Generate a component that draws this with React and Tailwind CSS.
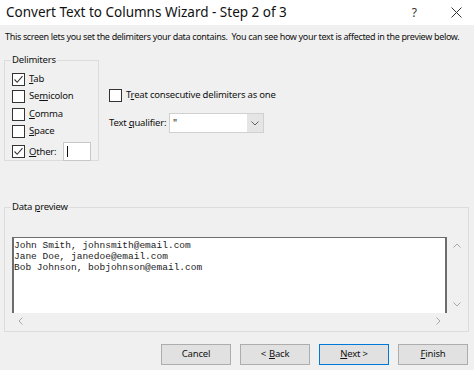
import React from "react";

const F = { fontFamily: '"Noto Sans", "Open Sans", sans-serif' };

function Box({ checked }) {
  return (
    <span className="w-[13px] h-[13px] border border-[#333333] bg-white flex items-center justify-center shrink-0">
      {checked && (
        <svg width="11" height="11" viewBox="0 0 11 11">
          <path d="M1.5 5.5 L4.2 8.3 L9.5 2.2" fill="none" stroke="#333" strokeWidth="1.1" />
        </svg>
      )}
    </span>
  );
}

function Chk({ checked, pre, u, post }) {
  return (
    <div className="flex items-center h-[17.5px]">
      <Box checked={checked} />
      <span className="ml-[4px] text-[9.5px] tracking-[-0.2px] text-[#111]">
        {pre}
        <span className="underline">{u}</span>
        {post}
      </span>
    </div>
  );
}

function Btn({ children, primary }) {
  return (
    <div
      className={
        "w-[70px] h-[21px] flex items-center justify-center text-[9.5px] tracking-[-0.2px] text-[#111] bg-[#e1e1e1] border " +
        (primary ? "border-[#0078d7]" : "border-[#adadad]")
      }
    >
      {children}
    </div>
  );
}

export default function App() {
  return (
    <div className="w-[474px] h-[370px] bg-[#f0f0f0] overflow-hidden flex flex-col" style={F}>
      <div className="h-[25px] bg-white flex items-center pl-[6px] shrink-0">
        <span className="text-[13.5px] text-[#111]">Convert Text to Columns Wizard - Step 2 of 3</span>
        <span className="ml-auto text-[12px] text-[#333] mr-[34px]">?</span>
        <svg width="11" height="11" viewBox="0 0 11 11" className="mr-[12px]">
          <path d="M0.5 0.5 L10.5 10.5 M10.5 0.5 L0.5 10.5" stroke="#333" strokeWidth="1" />
        </svg>
      </div>
      <div className="pl-[5px] pt-[5px] h-[25px] text-[9px] text-[#111] whitespace-nowrap tracking-[-0.33px]">
        This screen lets you set the delimiters your data contains.&nbsp; You can see how your text is affected in the preview below.
      </div>
      <div className="flex mt-[3px]">
        <fieldset className="ml-[4px] w-[95px] h-[108px] border border-[#dcdcdc] pl-[7px] pt-[3px]">
          <legend className="text-[9.5px] tracking-[-0.2px] text-[#111] ml-[-1px] px-[1px]">Delimiters</legend>
          <Chk checked pre="" u="T" post="ab" />
          <Chk pre="Se" u="m" post="icolon" />
          <Chk pre="" u="C" post="omma" />
          <Chk pre="" u="S" post="pace" />
          <div className="flex items-center h-[21px] mt-[1px]">
            <Box checked />
            <span className="ml-[4px] text-[9.5px] tracking-[-0.2px] text-[#111]">
              <span className="underline">O</span>ther:
            </span>
            <span className="ml-[7px] w-[28px] h-[19px] bg-white border border-[#c8c8c8] flex items-center pl-[3px]">
              <span className="w-px h-[11px] bg-[#111]" />
            </span>
          </div>
        </fieldset>
        <div className="ml-[10px] pt-[35px] flex flex-col">
          <div className="flex items-center">
            <Box />
            <span className="ml-[4px] text-[9.5px] tracking-[-0.2px] text-[#111]">
              T<span className="underline">r</span>eat consecutive delimiters as one
            </span>
          </div>
          <div className="flex items-center mt-[11px]">
            <span className="w-[60px] text-[9.5px] tracking-[-0.2px] text-[#111] whitespace-nowrap">
              Text <span className="underline">q</span>ualifier:
            </span>
            <div className="w-[95px] h-[20px] bg-white border border-[#d0d0d0] flex items-center">
              <span className="ml-[3px] text-[10px] text-[#111] flex-1">"</span>
              <span className="w-[16px] h-full bg-[#e5e5e5] flex items-center justify-center">
                <svg width="8" height="5" viewBox="0 0 8 5">
                  <path d="M0.5 0.5 L4 4 L7.5 0.5" fill="none" stroke="#606060" strokeWidth="1" />
                </svg>
              </span>
            </div>
          </div>
        </div>
      </div>
      <fieldset className="mx-[4px] mt-[39px] w-[465px] h-[132px] border border-[#dcdcdc] pl-[7px] pt-[23px]">
        <legend className="text-[9.5px] tracking-[-0.2px] text-[#111] ml-[-1px] px-[1px]">
          Data <span className="underline">p</span>review
        </legend>
        <div className="flex">
          <div className="w-[435px] h-[76px] bg-white border-t border-l-2 border-r-2 border-[#6d6d6d] pt-[2px]">
            <pre className="text-[9.5px] leading-[11px] text-[#222]" style={{ fontFamily: '"Liberation Mono", monospace' }}>
{`John Smith, johnsmith@email.com
Jane Doe, janedoe@email.com
Bob Johnson, bobjohnson@email.com`}
            </pre>
          </div>
          <div className="w-[20px] h-[76px] flex flex-col items-center justify-between py-[6px]">
            <svg width="8" height="5" viewBox="0 0 8 5">
              <path d="M0.5 4.5 L4 1 L7.5 4.5" fill="none" stroke="#a8a8a8" strokeWidth="1" />
            </svg>
            <svg width="8" height="5" viewBox="0 0 8 5">
              <path d="M0.5 0.5 L4 4 L7.5 0.5" fill="none" stroke="#a8a8a8" strokeWidth="1" />
            </svg>
          </div>
        </div>
        <div className="w-[435px] h-[16px] flex items-center justify-between px-[6px]">
          <svg width="5" height="8" viewBox="0 0 5 8">
            <path d="M4.5 0.5 L1 4 L4.5 7.5" fill="none" stroke="#a8a8a8" strokeWidth="1" />
          </svg>
          <svg width="5" height="8" viewBox="0 0 5 8">
            <path d="M0.5 0.5 L4 4 L0.5 7.5" fill="none" stroke="#a8a8a8" strokeWidth="1" />
          </svg>
        </div>
      </fieldset>
      <div className="flex justify-end gap-[9px] pr-[6px] mt-[12px]">
        <Btn>Cancel</Btn>
        <Btn>
          &lt; <span className="underline ml-[3px]">B</span>ack
        </Btn>
        <Btn primary>
          <span className="underline">N</span>ext &gt;
        </Btn>
        <Btn>
          <span className="underline">F</span>inish
        </Btn>
      </div>
    </div>
  );
}
